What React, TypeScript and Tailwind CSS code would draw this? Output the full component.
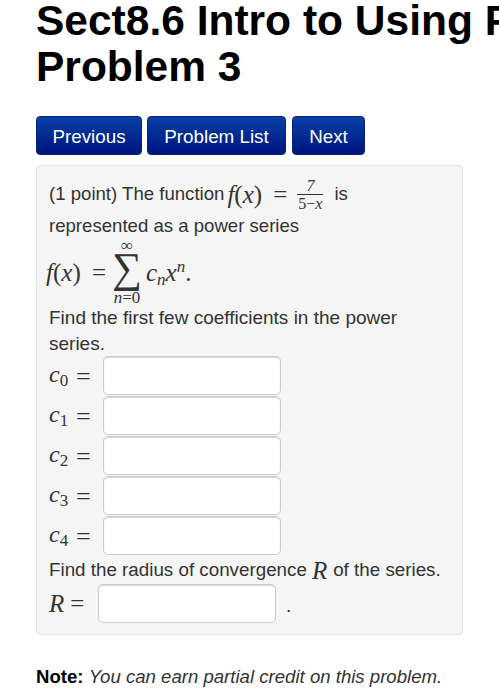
import React from "react";

const serif = "font-['Liberation_Serif',serif]";

function Sub({ name, i }: { name: string; i: string }) {
  return (
    <span className={`${serif} text-[24px] italic leading-none text-[#333]`}>
      {name}
      <span className="relative top-[4px] text-[17px] not-italic">{i}</span>
    </span>
  );
}

function CoefRow({ i }: { i: string }) {
  return (
    <div className="flex h-[40px] items-center">
      <div className="flex w-[54px] items-center pt-[3px]">
        <div className="w-[27px]">
          <Sub name="c" i={i} />
        </div>
        <span className={`${serif} text-[26px] leading-none text-[#333]`}>=</span>
      </div>
      <input
        aria-label={`c${i}`}
        className="h-[39px] w-[178px] rounded-[5px] border border-[#ccc] bg-white shadow-[inset_0_1px_1px_rgba(0,0,0,0.15)]"
      />
    </div>
  );
}

export default function App() {
  return (
    <div className="h-[700px] w-[499px] overflow-hidden bg-white pl-[36px] font-['Liberation_Sans',sans-serif] text-[19px] text-[#333]">
      <h1 className="-mt-[2px] whitespace-nowrap text-[42.5px] font-bold leading-[46px] text-black">
        Sect8.6 Intro to Using Power Series
        <br />
        Problem 3
      </h1>

      <div className="mt-[26px] flex gap-[5px] text-white">
        <button className="h-[39px] w-[106px] rounded-[4px] border border-[#04207a] bg-gradient-to-b from-[#0a3fa5] to-[#00127f] pt-[3px] text-[18.8px]">
          Previous
        </button>
        <button className="h-[39px] w-[139px] rounded-[4px] border border-[#04207a] bg-gradient-to-b from-[#0a3fa5] to-[#00127f] pt-[3px] text-[18.8px]">
          Problem List
        </button>
        <button className="ml-[1px] h-[39px] w-[73px] rounded-[4px] border border-[#04207a] bg-gradient-to-b from-[#0a3fa5] to-[#00127f] pt-[3px] text-[18.8px]">
          Next
        </button>
      </div>

      <div className="mt-[10px] h-[470px] w-[427px] rounded-[4px] border border-[#e3e3e3] bg-[#f5f5f5] pl-[12px] pt-[11px]">
        <div className="flex h-[34px] items-center text-[18.6px]">
          <span>(1 point) The function</span>
          <span className={`${serif} ml-[3px] flex w-[60px] justify-between whitespace-nowrap text-[25px] leading-none`}>
            <span>
              <i>f</i>(<i>x</i>)
            </span>
            <span>=</span>
          </span>
          <span className={`${serif} ml-[9px] flex w-[28px] flex-col items-center text-[16px] leading-[15px]`}>
            <i className="border-b border-[#333] px-[9px] pb-[1px]">7</i>
            <span className="whitespace-nowrap pt-[1px]">
              5−<i>x</i>
            </span>
          </span>
          <span className="ml-[10px]">is</span>
        </div>
        <div className="mt-[2px] h-[26px] text-[18.6px] leading-[26px]">represented as a power series</div>
        <div className="flex h-[66px] items-center">
          <span className={`${serif} -ml-[3px] flex w-[60px] justify-between whitespace-nowrap text-[25px] leading-none`}>
            <span>
              <i>f</i>(<i>x</i>)
            </span>
            <span>=</span>
          </span>
          <span className={`${serif} ml-[6px] flex w-[30px] flex-col items-center leading-none`}>
            <span className="text-[17px] leading-[11px]">∞</span>
            <span className="h-[40px] text-[42px] leading-[34px]">∑</span>
            <span className="whitespace-nowrap text-[17px] leading-[13px]">
              <i>n</i>=0
            </span>
          </span>
          <span className={`${serif} ml-[4px] text-[25px] italic leading-none`}>
            c
            <span className="relative top-[4px] text-[17px]">n</span>x
            <span className="relative -top-[9px] text-[17px]">n</span>
            <span className="not-italic">.</span>
          </span>
        </div>
        <div className="h-[26px] leading-[26px]">Find the first few coefficients in the power</div>
        <div className="h-[24px] leading-[26px]">series.</div>
        <div className="flex flex-col">
          <CoefRow i="0" />
          <CoefRow i="1" />
          <CoefRow i="2" />
          <CoefRow i="3" />
          <CoefRow i="4" />
        </div>
        <div className="mt-[2px] flex h-[26px] items-center text-[18.8px]">
          <span>Find the radius of convergence</span>
          <i className={`${serif} ml-[5px] text-[25px] leading-none`}>R</i>
          <span className="ml-[6px]">of the series.</span>
        </div>
        <div className="mt-[1px] flex h-[39px] items-center">
          <span className={`${serif} flex w-[49px] whitespace-nowrap text-[25px] leading-none`}>
            <i>R</i>
            <span className="ml-[6px]">=</span>
          </span>
          <input
            aria-label="R"
            className="h-[39px] w-[178px] rounded-[5px] border border-[#ccc] bg-white shadow-[inset_0_1px_1px_rgba(0,0,0,0.15)]"
          />
          <span className="relative top-[3px] ml-[10px]">.</span>
        </div>
      </div>

      <p className="mt-[28px] text-[18.6px] text-black">
        <b>Note:</b> <i className="text-[#333]">You can earn partial credit on this problem.</i>
      </p>
    </div>
  );
}
